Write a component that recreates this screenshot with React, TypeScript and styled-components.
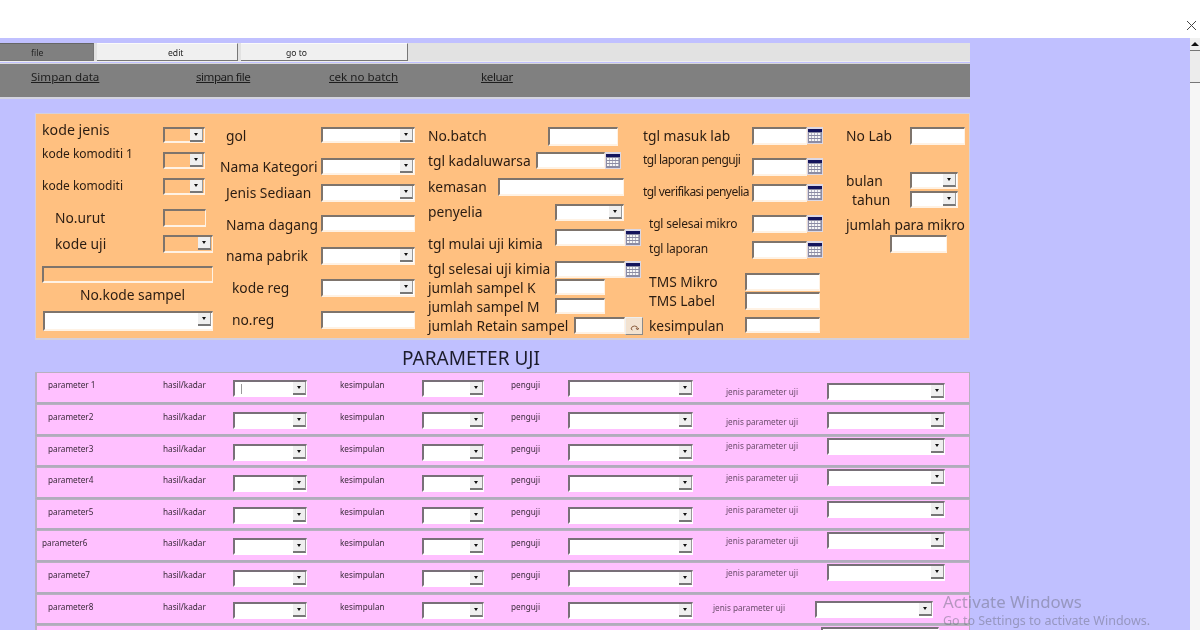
import React from "react";
import styled, { createGlobalStyle } from "styled-components";

const Global = createGlobalStyle`
  html, body { margin: 0; padding: 0; background: #fff; overflow: hidden; }
  * { box-sizing: border-box; }
`;
const FONT = `"Noto Sans", "DejaVu Sans", sans-serif`;

const Page = styled.div`
  width: 1200px; height: 630px; overflow: hidden; position: relative;
  font-family: ${FONT}; color: #2a1a10; display: flex; flex-direction: column;
  filter: blur(0.3px);
`;
const TitleBar = styled.div`
  height: 38px; background: #fff; display: flex; justify-content: flex-end; align-items: flex-end;
  padding: 0 3px 7px 0; flex: none;
`;
const Body = styled.div`flex: 1; display: flex; min-height: 0;`;
const Canvas = styled.div`flex: 1; background: #c0c0ff; padding-top: 5px; overflow: hidden;`;
const Scrollbar = styled.div`width: 10px; background: #f6f6f6; display: flex; flex-direction: column; flex: none;`;
const ArrowBox = styled.div`
  height: 13px; background: #f0f0f0; border-bottom: 1px solid #777;
  display: flex; justify-content: center; align-items: center;
  &::after { content: ""; border: 4px solid transparent; border-top: 0; border-bottom: 4px solid #111; }
`;
const Thumb = styled.div`height: 32px; background: #ececec; border-bottom: 1px solid #777;`;

const TabStrip = styled.div`
  width: 970px; height: 19px; background: #e2e2e2; display: flex; gap: 3px; border-bottom: 1px solid #eee;
`;
const Tab = styled.div<{ $w: number; $on?: boolean; $pl: number }>`
  width: ${(p) => p.$w}px; height: 18px; padding-left: ${(p) => p.$pl}px; font-size: 8.6px; line-height: 18px;
  background: ${(p) => (p.$on ? "#808080" : "#f0f0f0")}; color: #222;
  border-right: 1px solid #777; border-bottom: 1px solid #777;
  border-top: 1px solid ${(p) => (p.$on ? "#666" : "#fafafa")};
`;
const Toolbar = styled.div`
  width: 970px; height: 36px; margin-top: 1px; background: #808080; border-top: 1px solid #d8d8d8;
  border-bottom: 2px solid #d4d4e0; display: flex; align-items: flex-start; padding-top: 4px;
`;
const ToolLink = styled.a<{ $w: number; $ls?: number }>`
  flex: none; width: ${(p) => p.$w}px; font-size: 11.6px; line-height: 18px; color: #1d1d1d; text-decoration: underline;
  letter-spacing: ${(p) => p.$ls ?? 0}px;
  &:first-child { margin-left: 31px; }
`;

const Panel = styled.div`
  width: 935px; height: 227px; margin: 14px 0 0 35px; background: #ffc080;
  border: 1px solid #d4d0dc; border-bottom-width: 2px;
  padding-left: 6px; display: flex;
`;
const Col = styled.div<{ $w: number }>`width: ${(p) => p.$w}px; flex: none; display: flex; flex-direction: column;`;
const Row = styled.div<{ $mt: number; $h: number }>`
  display: flex; align-items: flex-start; height: ${(p) => p.$h}px; margin-top: ${(p) => p.$mt}px; flex: none;
`;
const Label = styled.div<{ $ml: number; $w: number; $s: number; $dy: number; $ls?: number }>`
  flex: none; white-space: nowrap; margin-left: ${(p) => p.$ml}px; width: ${(p) => p.$w}px;
  margin-top: ${(p) => p.$dy}px; font-size: ${(p) => p.$s}px; line-height: 16px;
  letter-spacing: ${(p) => p.$ls ?? 0}px; color: #2a1c12;
`;
const Sunken = styled.div<{ $w: number; $h: number; $clear?: boolean }>`
  flex: none; width: ${(p) => p.$w}px; height: ${(p) => p.$h}px;
  background: ${(p) => (p.$clear ? "#ffc080" : "#fff")};
  border-style: solid; border-width: 2px 1px 2px 2px;
  border-color: #7e746c #fff2e4 #fff2e4 #7e746c;
  display: flex; justify-content: flex-end; align-items: flex-start; padding-right: 1px;
`;
const Drop = styled.div`
  width: 13px; height: 13px; background: #efefef; border-bottom: 2px solid #777; border-right: 1px solid #999;
  display: flex; justify-content: center; align-items: center;
  &::after { content: ""; border: 2.5px solid transparent; border-top: 3px solid #111; border-bottom: 0; }
`;
const CalBox = styled.div`flex: none; width: 16px; height: 17px; background: #dcd8e4; display: flex; align-items: center; justify-content: center;`;
const MiniBtn = styled.div`
  flex: none; width: 18px; height: 18px; background: #f2e2d0; border: 1px solid #8a8a8a; border-top-color: #eee; border-left-color: #eee;
  display: flex; align-items: flex-end; justify-content: center; padding-bottom: 3px;
`;

const Heading = styled.div`
  width: 942px; height: 32px; padding-top: 6px; text-align: center; font-size: 19px; line-height: 24px; color: #1c1c2c;
`;
const ParamList = styled.div`width: 935px; margin-left: 35px; display: flex; flex-direction: column;`;
const ParamRow = styled.div<{ $h: number }>`
  height: ${(p) => p.$h}px; background: #ffc0ff; flex: none;
  border: 1px solid #b8b0c0; border-left-width: 2px; border-bottom: 2px solid #b0acbc;
  display: flex; align-items: flex-start;
`;
const Cell = styled.div<{ $w: number; $dy: number; $ml?: number }>`
  flex: none; width: ${(p) => p.$w}px; margin-top: ${(p) => p.$dy}px; margin-left: ${(p) => p.$ml ?? 0}px;
  font-size: 8.2px; line-height: 12px; white-space: nowrap; color: #3a2a3a;
`;
const JenisCell = styled(Cell)`color: #6a4c6a;`;
const PSelect = styled.div<{ $w: number; $dy: number; $ml?: number }>`
  flex: none; width: ${(p) => p.$w}px; height: 17px; margin-top: ${(p) => p.$dy}px; margin-left: ${(p) => p.$ml ?? 0}px; background: #fff;
  border-style: solid; border-width: 2px 1px 2px 2px; border-color: #787078 #fff #fff #787078;
  display: flex; justify-content: flex-end;
`;
const Caret = styled.div`width: 1px; height: 10px; margin: 2px auto 0 6px; background: #999;`;

const Watermark = styled.div`position: absolute; left: 943px; top: 591px; color: rgba(110,110,130,0.5); pointer-events: none;`;
const WmTitle = styled.div`font-size: 16.8px; line-height: 21px;`;
const WmSub = styled.div`font-size: 12.5px; line-height: 18px; white-space: nowrap;`;

type K = "c" | "i" | "d" | "b" | "n";
type F = { y: number; h: number; lx: number; ly: number; t: string; s: number; cx?: number; w?: number; k: K; clear?: boolean; ls?: number };

const TOP = 114;
const BIG = 13.8;
const columns: { x: number; w: number; rows: F[] }[] = [
  { x: 42, w: 178, rows: [
    { y: 127, h: 16, lx: 42, ly: 130, t: "kode jenis", s: 14.2, cx: 163, w: 42, k: "c", clear: true },
    { y: 152, h: 17, lx: 42, ly: 154, t: "kode komoditi 1", s: 12, cx: 163, w: 42, k: "c", clear: true },
    { y: 178, h: 17, lx: 42, ly: 186, t: "kode komoditi", s: 12, cx: 163, w: 42, k: "c", clear: true },
    { y: 209, h: 18, lx: 55, ly: 218, t: "No.urut", s: BIG, cx: 163, w: 43, k: "i", clear: true },
    { y: 235, h: 18, lx: 55, ly: 244, t: "kode uji", s: BIG, cx: 163, w: 50, k: "c", clear: true },
    { y: 266, h: 17, lx: 42, ly: 274, t: "", s: BIG, cx: 42, w: 171, k: "i", clear: true },
    { y: 287, h: 16, lx: 80, ly: 295, t: "No.kode sampel", s: BIG, k: "n" },
    { y: 311, h: 20, lx: 43, ly: 321, t: "", s: BIG, cx: 43, w: 170, k: "c" },
  ]},
  { x: 220, w: 208, rows: [
    { y: 127, h: 16, lx: 226, ly: 136, t: "gol", s: BIG, cx: 321, w: 94, k: "c" },
    { y: 158, h: 17, lx: 220, ly: 167, t: "Nama Kategori", s: BIG, cx: 321, w: 94, k: "c" },
    { y: 184, h: 18, lx: 226, ly: 193, t: "Jenis Sediaan", s: BIG, cx: 321, w: 94, k: "c" },
    { y: 215, h: 17, lx: 226, ly: 225, t: "Nama dagang", s: BIG, cx: 321, w: 94, k: "i" },
    { y: 247, h: 18, lx: 226, ly: 256, t: "nama pabrik", s: BIG, cx: 321, w: 94, k: "c" },
    { y: 279, h: 18, lx: 232, ly: 288, t: "kode reg", s: BIG, cx: 321, w: 94, k: "c" },
    { y: 311, h: 18, lx: 232, ly: 320, t: "no.reg", s: BIG, cx: 321, w: 94, k: "i" },
  ]},
  { x: 428, w: 215, rows: [
    { y: 127, h: 19, lx: 428, ly: 136, t: "No.batch", s: BIG, cx: 548, w: 70, k: "i" },
    { y: 152, h: 17, lx: 428, ly: 161, t: "tgl kadaluwarsa", s: BIG, cx: 536, w: 69, k: "d" },
    { y: 178, h: 18, lx: 428, ly: 187, t: "kemasan", s: BIG, cx: 498, w: 126, k: "i" },
    { y: 204, h: 17, lx: 428, ly: 212, t: "penyelia", s: BIG, cx: 555, w: 69, k: "c" },
    { y: 229, h: 17, lx: 428, ly: 244, t: "tgl mulai uji kimia", s: BIG, cx: 555, w: 70, k: "d" },
    { y: 261, h: 17, lx: 428, ly: 269, t: "tgl selesai uji kimia", s: BIG, cx: 555, w: 70, k: "d" },
    { y: 279, h: 16, lx: 428, ly: 288, t: "jumlah sampel K", s: BIG, cx: 555, w: 50, k: "i" },
    { y: 298, h: 16, lx: 428, ly: 307, t: "jumlah sampel M", s: BIG, cx: 555, w: 50, k: "i" },
    { y: 317, h: 17, lx: 428, ly: 326, t: "jumlah Retain sampel", s: BIG, cx: 574, w: 51, k: "b" },
  ]},
  { x: 643, w: 203, rows: [
    { y: 127, h: 18, lx: 643, ly: 136, t: "tgl masuk lab", s: BIG, cx: 752, w: 55, k: "d" },
    { y: 158, h: 18, lx: 643, ly: 160, t: "tgl laporan penguji", s: 12, cx: 752, w: 55, k: "d", ls: -0.5 },
    { y: 184, h: 18, lx: 643, ly: 192, t: "tgl verifikasi penyelia", s: 12, cx: 752, w: 55, k: "d", ls: -0.55 },
    { y: 215, h: 18, lx: 649, ly: 224, t: "tgl selesai mikro", s: 12, cx: 752, w: 55, k: "d", ls: -0.2 },
    { y: 241, h: 18, lx: 649, ly: 249, t: "tgl laporan", s: 12, cx: 752, w: 55, k: "d", ls: -0.2 },
    { y: 273, h: 18, lx: 649, ly: 282, t: "TMS Mikro", s: BIG, cx: 745, w: 75, k: "i" },
    { y: 292, h: 18, lx: 649, ly: 301, t: "TMS Label", s: BIG, cx: 745, w: 75, k: "i" },
    { y: 317, h: 16, lx: 649, ly: 326, t: "kesimpulan", s: BIG, cx: 745, w: 75, k: "i" },
  ]},
  { x: 846, w: 122, rows: [
    { y: 127, h: 18, lx: 846, ly: 136, t: "No Lab", s: BIG, cx: 910, w: 55, k: "i" },
    { y: 172, h: 17, lx: 846, ly: 181, t: "bulan", s: BIG, cx: 910, w: 48, k: "c" },
    { y: 191, h: 17, lx: 852, ly: 200, t: "tahun", s: BIG, cx: 910, w: 48, k: "c" },
    { y: 217, h: 16, lx: 846, ly: 225, t: "jumlah para mikro", s: BIG, k: "n" },
    { y: 235, h: 18, lx: 846, ly: 244, t: "", s: BIG, cx: 890, w: 57, k: "i" },
  ]},
];

const CalIcon = () => (
  <svg width="14" height="14" viewBox="0 0 14 14">
    <rect width="14" height="14" fill="#8c8ca4" />
    <rect x="0" y="0" width="14" height="3" fill="#14145c" />
    {[1, 4, 7, 10].map((x) =>
      [4, 7, 10].map((y) => <rect key={`${x}-${y}`} x={x} y={y} width="2.4" height="2" fill="#f6f6f6" />)
    )}
  </svg>
);
const UndoIcon = () => (
  <svg width="9" height="6" viewBox="0 0 9 6">
    <path d="M1 4 Q1.5 1 4.5 1 Q7.5 1 7.5 3.5 M6 3 L7.5 5 L8.8 3 M1 4 L2.5 5" fill="none" stroke="#805030" strokeWidth="0.9" />
  </svg>
);
const Close = () => (
  <svg width="11" height="11" viewBox="0 0 11 11">
    <path d="M1 1 L10 10 M10 1 L1 10" stroke="#444" strokeWidth="1" />
  </svg>
);

const Field = ({ f, colX, mt }: { f: F; colX: number; mt: number }) => {
  const ml = f.lx - colX;
  const lw = f.cx !== undefined ? f.cx - f.lx : 0;
  const gapLeft = f.t ? ml : f.cx! - colX;
  return (
    <Row $mt={mt} $h={f.h}>
      {f.t ? (
        <Label $ml={ml} $w={lw || 180} $s={f.s} $dy={f.ly - 8 - f.y} $ls={f.ls}>{f.t}</Label>
      ) : (
        <Label $ml={gapLeft} $w={0} $s={f.s} $dy={0} />
      )}
      {f.k !== "n" && (
        <Sunken $w={f.w!} $h={f.h} $clear={f.clear}>{f.k === "c" && <Drop />}</Sunken>
      )}
      {f.k === "d" && <CalBox><CalIcon /></CalBox>}
      {f.k === "b" && <MiniBtn><UndoIcon /></MiniBtn>}
    </Row>
  );
};

const params = [
  { name: "parameter 1", ml: 0, h: 32, l: 6, c: 7, jl: 13, jc: 10, cur: true },
  { name: "parameter2", ml: 0, h: 32, l: 6, c: 7, jl: 11, jc: 7 },
  { name: "parameter3", ml: 0, h: 31, l: 6, c: 7, jl: 3, jc: 1 },
  { name: "parameter4", ml: 0, h: 32, l: 6, c: 7, jl: 4, jc: 1 },
  { name: "parameter5", ml: 0, h: 31, l: 6, c: 7, jl: 4, jc: 1 },
  { name: "parameter6", ml: -6, h: 32, l: 6, c: 7, jl: 4, jc: 1 },
  { name: "paramete7", ml: 0, h: 32, l: 6, c: 7, jl: 4, jc: 1 },
  { name: "parameter8", ml: 0, h: 31, l: 6, c: 7, jl: 7, jc: 6, shift: true },
];

export default function App() {
  return (
    <Page>
      <Global />
      <TitleBar><Close /></TitleBar>
      <Body>
        <Canvas>
          <TabStrip>
            <Tab $w={94} $pl={31} $on>file</Tab>
            <Tab $w={141} $pl={71}>edit</Tab>
            <Tab $w={167} $pl={45}>go to</Tab>
          </TabStrip>
          <Toolbar>
            <ToolLink $w={165}>Simpan data</ToolLink>
            <ToolLink $w={133} $ls={-0.5}>simpan file</ToolLink>
            <ToolLink $w={152}>cek no batch</ToolLink>
            <ToolLink $w={60} $ls={-0.4}>keluar</ToolLink>
          </Toolbar>
          <Panel>
            {columns.map((col) => (
              <Col key={col.x} $w={col.w}>
                {col.rows.map((f, i) => {
                  const prev = i === 0 ? TOP : col.rows[i - 1].y + col.rows[i - 1].h;
                  return <Field key={i} f={f} colX={col.x} mt={f.y - prev} />;
                })}
              </Col>
            ))}
          </Panel>
          <Heading>PARAMETER UJI</Heading>
          <ParamList>
            {params.map((p) => (
              <ParamRow key={p.name} $h={p.h}>
                <Cell $w={115 - p.ml} $dy={p.l} $ml={11 + p.ml}>{p.name}</Cell>
                <Cell $w={70} $dy={p.l}>hasil/kadar</Cell>
                <PSelect $w={74} $dy={p.c}>{p.cur && <Caret />}<Drop /></PSelect>
                <Cell $w={82} $dy={p.l} $ml={33}>kesimpulan</Cell>
                <PSelect $w={62} $dy={p.c}><Drop /></PSelect>
                <Cell $w={57} $dy={p.l} $ml={27}>penguji</Cell>
                <PSelect $w={125} $dy={p.c}><Drop /></PSelect>
                <JenisCell $w={p.shift ? 102 : 101} $dy={p.jl} $ml={p.shift ? 20 : 33}>jenis parameter uji</JenisCell>
                <PSelect $w={118} $dy={p.jc}><Drop /></PSelect>
              </ParamRow>
            ))}
            <ParamRow $h={31}>
              <PSelect $w={118} $dy={1} $ml={784} />
            </ParamRow>
          </ParamList>
        </Canvas>
        <Scrollbar>
          <ArrowBox />
          <Thumb />
        </Scrollbar>
      </Body>
      <Watermark>
        <WmTitle>Activate Windows</WmTitle>
        <WmSub>Go to Settings to activate Windows.</WmSub>
      </Watermark>
    </Page>
  );
}
